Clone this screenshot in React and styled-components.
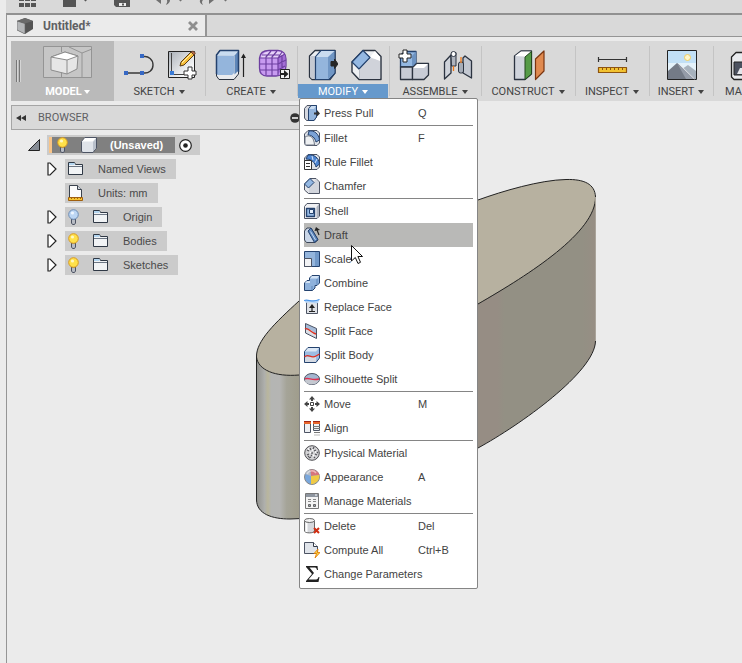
import React from "react";
import styled, { createGlobalStyle, css } from "styled-components";

const GlobalStyle = createGlobalStyle`
  * {
    box-sizing: border-box;
  }
  body {
    margin: 0;
    background: #ebebeb;
    color: #434343;
    font-family: "Liberation Sans", Arial, sans-serif;
    font-size: 11px;
  }
  button {
    border: 0;
    margin: 0;
    padding: 0;
    background: none;
    color: inherit;
    font: inherit;
  }
  svg {
    display: block;
    flex: none;
  }
`;

const Page = styled.div`
  display: flex;
  flex-direction: column;
  min-height: 100vh;
  padding-left: 6px;
  overflow: hidden;
`;

const QuickBar = styled.header`
  display: flex;
  height: 15px;
  padding-left: 12px;
  background: #d9d9d9;
  border-bottom: 2px solid #919191;
  overflow: hidden;
`;

const Main = styled.main`
  display: flex;
  flex: 1;
  flex-direction: column;
  border-left: 1px solid #959595;
`;

const TabStrip = styled.nav`
  display: flex;
  height: 22px;
  background: #d9d9d9;
  border-bottom: 1px solid #959595;
`;

const Tab = styled.div`
  display: flex;
  align-items: center;
  gap: 10px;
  width: 200px;
  padding: 0 7px 0 10px;
  background: #ebebeb;
  border-right: 2px solid #959595;
`;

const TabTitle = styled.span`
  flex: 1;
  color: #606064;
  font-family: Roboto, sans-serif;
  font-size: 12px;
  font-weight: 700;
`;

const Toolbar = styled.div`
  display: flex;
  height: 60px;
  margin: 4px 0 0 4px;
  background: #d9d9d9;
`;

const Workspace = styled.div`
  display: flex;
  flex: none;
  width: 103px;
  padding: 5px 0 3px 4px;
  background: #bababa;
`;

const Panel = styled.div`
  display: flex;
  flex: none;
  flex-direction: column;
  width: ${props => props.$width}px;
  padding: 5px 0 3px;
  background: linear-gradient(#c4c4c4, #c4c4c4) right 5px / 1px 50px no-repeat;
`;

const PanelIcons = styled.div`
  display: flex;
  flex: 1;
  align-items: center;
  justify-content: center;
  gap: 12px;
`;

const PanelFoot = styled.div`
  position: relative;
  padding-right: 2px;
`;

const PanelButton = styled.button`
  display: flex;
  align-items: center;
  justify-content: center;
  gap: 4px;
  width: 100%;
  height: 14px;
  padding-top: 1px;
  font-family: Roboto, sans-serif;
  font-size: 11px;
  line-height: 13px;
  ${props =>
    props.$active &&
    css`
      background: #6699cc;
      color: #fff;
    `}
`;

const WorkspaceButton = styled(PanelButton)`
  gap: 2px;
  color: #fff;
  font-weight: 700;
`;

const WorkspaceBody = styled.div`
  display: flex;
  flex: 1;
  flex-direction: column;
  align-items: center;
  justify-content: space-between;
`;

const Menu = styled.ul`
  position: absolute;
  top: 100%;
  left: 1px;
  z-index: 2;
  width: 179px;
  margin: 0;
  padding: 2px 4px;
  list-style: none;
  background: #fff;
  border: 1px solid #858585;
  border-radius: 2px;
`;

const MenuDivider = styled.li`
  height: 1px;
  background: #858585;
`;

const MenuRow = styled.li`
  position: relative;
`;

const MenuItem = styled.button`
  display: grid;
  grid-template-columns: 16px 90px 1fr;
  align-items: center;
  column-gap: 4px;
  width: 100%;
  height: 24px;
  text-align: left;
  white-space: nowrap;
  background: ${props => (props.$hover ? "#b9b9b7" : "none")};
`;

const Cursor = styled.svg`
  position: absolute;
  top: 22px;
  left: 47px;
  z-index: 3;
`;

const Viewport = styled.section`
  position: relative;
  flex: 1;
  padding: 4px 0 0 4px;
`;

const Scene = styled.svg`
  position: absolute;
  top: 0;
  left: 0;
`;

const Browser = styled.aside`
  position: relative;
  width: 290px;
`;

const BrowserHeader = styled.div`
  display: flex;
  align-items: center;
  height: 25px;
  padding: 0 0 0 4px;
  background: #d9d9d9;
  border: 1px solid #a5a5a5;
`;

const BrowserTitle = styled.span`
  flex: 1;
  margin-left: 12px;
  color: #606064;
  font-family: Roboto, sans-serif;
`;

const Tree = styled.ul`
  display: flex;
  flex-direction: column;
  gap: 4px;
  margin: 0;
  padding: 5px 0 0 36px;
  list-style: none;
`;

const TreeRow = styled.li`
  display: flex;
  align-items: center;
  height: 20px;
  margin-left: ${props => (props.$root ? "-19px" : "0")};
`;

const Toggle = styled.button`
  width: ${props => (props.$root ? "19px" : "18px")};
`;

const Chip = styled.div`
  display: flex;
  align-items: center;
  gap: 14px;
  height: 20px;
  padding: 0 10px 0 3px;
  background: #cbcbcb;
  color: #4a4a4a;
`;

const RootChip = styled(Chip)`
  padding: 0 8px 0 2px;
  gap: 4px;
`;

const RootLabel = styled.div`
  display: flex;
  align-items: center;
  gap: 13px;
  width: 126px;
  height: 16px;
  padding-left: 5px;
  background: #808080;
  border-left: 3px solid #f8c488;
  color: #fff;
  font-weight: 700;
`;

const Caret = () => (
  <svg width="6" height="4" viewBox="0 0 6 4">
    <path d="M0 0H6L3 4Z" fill="currentColor" />
  </svg>
);

/* toolbar icons */

const ink = "#2b3340";
const navy = "#24426e";
const Big = ({ children }) => (
  <svg width="32" height="32" viewBox="0 0 32 32" strokeLinejoin="round">
    {children}
  </svg>
);

const SpotIcon = () => (
  <Big>
    <path d="M4 24H20M20 7.500H23C26 7.500 31 10 31 16C31 22 26 24 23 24H20" fill="none" stroke="#383838" strokeWidth="1.400" />
    <path d="M2 22h4v4H2ZM18 22h4v4h-4ZM18 5h4v4h-4Z" fill="#3668c4" />
  </Big>
);

const SketchIcon = () => (
  <Big>
    <defs>
      <linearGradient id="paper" x1="0" y1="0" x2="1" y2="1">
        <stop offset="0" stopColor="#aab0b8" />
        <stop offset=".75" stopColor="#f6f7f8" />
      </linearGradient>
    </defs>
    <rect x="2.500" y="2.500" width="26" height="26" fill="url(#paper)" stroke="#222" />
    <path d="M5.500 4V25.500H20" fill="none" stroke="#444" />
    <rect x="4" y="22" width="4" height="4" fill="#3a7bd5" />
    <path d="M14 17L15 13L25 3L28 6L18 16Z" fill="#f8c03c" stroke="#5a3b12" />
    <path d="M16 14L25.500 4.500" stroke="#fff2b0" />
    <path d="M25 3L28 6L29.500 4L27 2Z" fill="#b06a4a" stroke="#6a3a22" strokeWidth=".6" />
    <path d="M22 18h4v4h4v4h-4v4h-4v-4h-4v-4h4Z" fill="#fff" stroke="#333" />
  </Big>
);

const ExtrudeIcon = () => (
  <Big>
    <path d="M2.500 6L6 1.500H24.500V25L20 30.500H5L2.500 27Z" fill="#e8eaee" stroke={ink} />
    <path d="M3 6.500H20V24L18 26H3Z" fill="#94b5dc" />
    <path d="M3 6L6.500 2H24L20 6.500Z" fill="#c9dcf0" />
    <path d="M20.500 6.500L24 2.500V22L20.500 25.500Z" fill="#5e86b8" />
    <path d="M2.500 25V6L6 1.500H24.500V23" fill="none" stroke={navy} strokeWidth="1.500" />
    <path d="M29.500 28V6" stroke="#222" strokeWidth="1.200" />
    <path d="M27 9L29.500 4.500L32 9Z" fill="#222" />
  </Big>
);

const FormIcon = () => (
  <Big>
    <path d="M1.500 9C2 4 6 1.500 11 1.500H20C25 1.500 28 5 28 10V17C28 22 24 27 18 27H9C4 27 1.500 24 1.500 19Z" fill="#c79af0" stroke="#6d3fa0" strokeWidth="1.300" />
    <path d="M3 8C5 4 8 2.500 12 2.500H20C24 3 26 5 26 6L20 9H4Z" fill="#e6d3f8" />
    <path d="M20 9L27 5V18L20 25Z" fill="#a36dd6" />
    <path d="M2 9H20L27 5M2 15H20L28 11M2 21H20L27 17M8 26V8L13 2M14 27V8L19 2M20 26V9L24 3M24 24V6M4 6H22" fill="none" stroke="#6d3fa0" strokeWidth="1.200" />
    <rect x="22.500" y="20.500" width="9" height="9" fill="#f2f2f2" stroke="#222" />
    <path d="M23 24h3v-3l4.500 4l-4.500 4v-3h-3Z" fill="#222" />
  </Big>
);

const PressPullIcon = () => (
  <Big>
    <path d="M3.500 7L9 1.500H29V24L24 30.500H6L3.500 28Z" fill="#eceef1" stroke={ink} strokeWidth="1.300" />
    <path d="M4 7H9V30H6L4 28Z" fill="#c5c9d2" />
    <path d="M9.500 8L15 1.500H29V24L23 30.500H9.500Z" fill="#94b5dc" stroke={navy} strokeWidth="1.200" />
    <path d="M10 8L15.500 2H28.500L23 8Z" fill="#cadcf0" />
    <path d="M22 8L28 2.500V24L22 30Z" fill="#7096c4" />
    <path d="M25 12.500h3.500V10L32 15L28.500 19.500V17H25Z" fill="#262626" stroke="#262626" />
  </Big>
);

const FilletIcon = () => (
  <Big>
    <path d="M2 13L13 1.500H25L31 7.500V30.500H9L2 23Z" fill="#eef0f2" stroke={ink} strokeWidth="1.400" />
    <path d="M10 20L21 9L30 11V30H10Z" fill="#d0d3da" />
    <path d="M20 8L25 2L30 8V12Z" fill="#fff" />
    <path d="M2 13L13 1.500L20 8.500L9 20Z" fill="#94b8e2" stroke={navy} strokeWidth="1.200" />
    <path d="M9.500 20.500V30" stroke="#b8bcc4" />
  </Big>
);

const ComponentIcon = () => (
  <Big>
    <path d="M2.500 6L7 2.500H18V14L15 18H2.500Z" fill="#94b8e2" stroke={navy} strokeWidth="1.300" />
    <path d="M14 7L18 2.500V14L14 18Z" fill="#6d93c2" />
    <path d="M2.500 18H14.500V30.500H2.500Z" fill="#c8ccd6" stroke={ink} strokeWidth="1.300" />
    <path d="M14.500 19L19 14.500H30.500V26L26 30.500H14.500Z" fill="#c8ccd6" stroke={ink} strokeWidth="1.300" />
    <path d="M15 19L19 15H30L26 19Z" fill="#fff" />
    <path d="M5 1h4v4h4v4h-4v4h-4v-4h-4v-4h4Z" fill="#fff" stroke="#222" />
  </Big>
);

const JointIcon = () => (
  <Big>
    <path d="M2.500 13L9 6V24L2.500 30Z" fill="#cfd3da" stroke={ink} strokeWidth="1.300" />
    <path d="M9 6L11 3.500H14V17H9.500Z" fill="#aeb4be" stroke={ink} />
    <circle cx="11.500" cy="5" r="2.500" fill="#fff" stroke={ink} />
    <path d="M21 9L23 7L29.500 12V29L21 24Z" fill="#c3c8d1" stroke={ink} strokeWidth="1.300" />
    <rect x="16.500" y="13" width="5" height="11" rx="2" fill="#a6adb8" stroke={ink} />
    <path d="M11.500 17V22M19 8V14" stroke="#f07818" strokeWidth="1.300" />
  </Big>
);

const PlaneIcon = () => (
  <Big>
    <path d="M1.500 7L8 2H18.500V25L12 30.500H1.500Z" fill="#d0d4dc" stroke={ink} strokeWidth="1.300" />
    <path d="M2 7L8 2.500H18L12 7.500Z" fill="#fff" />
    <path d="M12 8L18.500 2.500V25L12 30.500Z" fill="#559b48" stroke="#23491e" />
    <path d="M22.500 10L31 2V22L22.500 30.500Z" fill="#e08a50" stroke="#7a3510" strokeWidth="1.200" />
  </Big>
);

const InspectIcon = () => (
  <Big>
    <path d="M1.500 8V13M29.500 8V13M1.500 10.500H29.500" stroke="#333" strokeWidth="1.200" />
    <rect x="1.500" y="18.500" width="28" height="5" fill="#f2c230" stroke="#8e5410" strokeWidth="1.200" />
    <path d="M5.500 19v2M9.500 19v2M13.500 19v2M17.500 19v2M21.500 19v2M25.500 19v2" stroke="#8e5410" />
  </Big>
);

const ImageIcon = () => (
  <Big>
    <rect x="1.500" y="1.500" width="29" height="29" fill="#c2e0f6" stroke="#222" />
    <path d="M2 14H30V24H2Z" fill="#e4f2fa" />
    <path d="M16 20L22 16L30 22V30H16Z" fill="#a7b2bd" />
    <path d="M2 22L11 14L16 18L29 30H2Z" fill="#747b87" />
    <path d="M11 14L16 18L29 30H20Z" fill="#959ca8" />
    <path d="M13 15L28.500 30" stroke="#e8eaee" />
    <circle cx="21.500" cy="8.500" r="3" fill="#fff7cc" stroke="#f0cf60" />
  </Big>
);

const MakeIcon = () => (
  <Big>
    <path d="M1.500 8L6 3.500H27L31 8V26L28 30.500H4L1.500 28Z" fill="#e9ebee" stroke="#222" strokeWidth="1.300" />
    <rect x="4" y="13" width="25" height="13" fill="#4c5260" stroke="#222" />
    <path d="M7 25L10 19H20L23 25Z" fill="#e5e7eb" />
    <path d="M12 13h8v4l-4 4l-4-4Z" fill="#2f62c8" />
  </Big>
);

const WorkspaceIcon = () => (
  <svg width="50" height="32" viewBox="0 0 50 32" strokeLinejoin="round">
    <rect x=".5" y=".5" width="48" height="31" fill="#c6c6c6" stroke="#949494" />
    <path d="M18.500 0V6M18.500 26V31M26 1L39 7L49 3M39 7V31" fill="none" stroke="#949494" />
    <path d="M8 11L22 6L35 10L34 23L24 28L8 24Z" fill="#e6e6e6" stroke="#8c8c8c" />
    <path d="M8 11L22 6L35 10L24 14Z" fill="#fff" stroke="#8c8c8c" />
    <path d="M24 14V28" stroke="#8c8c8c" />
  </svg>
);

/* 16px icons */

const Small = ({ children }) => (
  <svg width="16" height="16" viewBox="0 0 16 16" fill="none" strokeLinejoin="round">
    {children}
  </svg>
);

const Block = () => (
  <path d="M.5 4L4 .5H13L15.500 3V13L13 15.500H2.500L.5 13Z" fill="#dfe2e8" stroke="#4c5363" />
);

const menuIcons = {
  press: (
    <Small>
      <path d="M.5 3.500L3 .5H12.500V12L10 15.500H2.500L.5 13Z" fill="#d5d8df" stroke="#4c5363" />
      <path d="M4.500 4L7 .5H12.500V12L10 15.500H4.500Z" fill="#94b5dc" stroke={navy} />
      <path d="M5 4L7.500 1H12L10 4Z" fill="#cadcf0" />
      <path d="M10 7.500H13V5L16 8.500L13 11.500V9.500H10Z" fill="#333" />
    </Small>
  ),
  fillet: (
    <Small>
      <Block />
      <path d="M5 1C10 0 15 4 15.500 10L12 12C11 8 8 5 4 5Z" fill="#7ba2d6" stroke={navy} />
      <path d="M1 7C6 4 10 7 10.500 15H1Z" fill="#eef0f2" stroke="#6f7785" />
    </Small>
  ),
  rule: (
    <Small>
      <Block />
      <path d="M4 1C10 0 15 4 15.500 10L12 13C11 9 8 5 2 5Z" fill="#4f86d2" stroke={navy} />
      <path d="M8 2L9 6M13 5L11 9" stroke="#d6e6fa" />
      <rect x=".5" y="6.500" width="7" height="9" fill="#fff" stroke="#333" />
      <path d="M2 9.500h4M2 12.500h4" stroke="#333" />
    </Small>
  ),
  chamfer: (
    <Small>
      <path d="M.5 6L6 .5H12L15.500 4V15.500H4.500L.5 12Z" fill="#e2e4e9" stroke="#4c5363" />
      <path d="M10 4L12 1L15 4.500V15H5V10Z" fill="#d2d5dc" />
      <path d="M.5 6L6 .5L10 4.500L4.500 10Z" fill="#94b8e2" stroke={navy} />
    </Small>
  ),
  shell: (
    <Small>
      <path d="M.5 3.500L3 .5H15.500V13L13 15.500H.5Z" fill="#f0f1f4" stroke="#4c5363" />
      <path d="M12.500 4L15 1V13L12.500 15Z" fill="#aeb4c0" />
      <rect x="2.500" y="5.500" width="8" height="8" fill="#94b8e2" stroke={navy} strokeWidth="1.400" />
      <path d="M5.500 6.500v4h4v-4Z" fill="#e6effa" stroke={navy} />
    </Small>
  ),
  draft: (
    <Small>
      <path d="M.5 4L3 1L7 1L14 13L11 15.500H2.500L.5 13Z" fill="#c9d6e8" stroke="#3c4658" />
      <path d="M4 4L7 1L14 12.500L10.500 15.500Z" fill="#5f88bd" stroke={navy} />
      <path d="M6.500 4.500L11.500 13" stroke="#c7dbf2" />
      <path d="M15 8L13 3" stroke="#222" strokeWidth="1.200" />
      <path d="M10.500 4L12 0L16 3Z" fill="#222" />
    </Small>
  ),
  scale: (
    <Small>
      <rect x=".5" y=".5" width="15" height="15" fill="#94b5dc" stroke={navy} />
      <path d="M11 1h4v14h-4Z" fill="#7299c8" />
      <path d="M.5 7.500H7.500V15.500H.5Z" fill="#f2f3f5" stroke="#4c5363" />
    </Small>
  ),
  combine: (
    <Small>
      <path d="M5.500 3L8 .5H15.500V8L13 10.500H11V13L8.500 15.500H.5V8L3 5.500H5.500Z" fill="#8fb2dc" stroke={navy} />
      <path d="M6 3.500L8 1H15L13 3.500ZM1 8L3 6H6V8Z" fill="#d3e3f5" />
      <path d="M13 4V10M8 11V15" stroke="#5f87ba" />
    </Small>
  ),
  replace: (
    <Small>
      <path d="M2.500 2V14.500H13.500V2" fill="#dfe2e7" stroke="#4c5363" />
      <path d="M0 1.500C5 0 8 4 15.500 0L14 4C9 5 6 2 2 4Z" fill="#b5d5f8" />
      <path d="M0 1.500C5 0 8 4 15.500 .5" stroke="#4d98ec" strokeWidth="1.200" />
      <path d="M8 12.500V7M5 12.500h6" stroke="#222" strokeWidth="1.200" />
      <path d="M5 9L8 5L11 9Z" fill="#222" />
    </Small>
  ),
  splitFace: (
    <Small>
      <path d="M1.500 .5L12.500 5.500V15.500L1.500 10Z" fill="#a5bbd8" stroke="#4c5363" />
      <path d="M2 7L7 7L12 11V14.500L2 9.500Z" fill="#dcdfe5" />
      <path d="M1 6C4 4 7 10 12 11" stroke="#e03020" strokeWidth="1.300" />
    </Small>
  ),
  splitBody: (
    <Small>
      <path d="M.5 4.500L4 .5H15.500V11L12 15.500H.5Z" fill="#9cbce2" stroke={navy} />
      <path d="M1 4.500L4 1H15L12 4.500Z" fill="#dbe7f5" />
      <path d="M1 10H12V15H1Z" fill="#d5dae3" />
      <path d="M.5 10C4 6 7 12 12 9L15.500 7" stroke="#e03020" strokeWidth="1.300" />
    </Small>
  ),
  silhouette: (
    <Small>
      <ellipse cx="8" cy="8" rx="7.500" ry="5.500" fill="#a3b6d0" stroke="#4c5363" />
      <path d="M1 9C4 5 8 11 15 8C15 15 1 15 1 9Z" fill="#c4c8d0" />
      <path d="M1 8C4 6 8 10 15 8" stroke="#e03050" strokeWidth="1.500" />
    </Small>
  ),
  move: (
    <Small>
      <path d="M8 0L11 3.500H9V5H7V3.500H5ZM8 16L5 12.500H7V11H9V12.500H11ZM0 8L3.500 5V7H5V9H3.500V11ZM16 8L12.500 11V9H11V7H12.500V5Z" fill="#444" />
      <rect x="6.500" y="6.500" width="3" height="3" stroke="#444" />
    </Small>
  ),
  align: (
    <Small>
      <path d="M.5 1.500h6v11h-6ZM9.500 1.500h6v9h-6Z" fill="#eef0f3" stroke="#4c5363" />
      <path d="M0 1h7v3h-7ZM9 1h7v3h-7Z" fill="#e8662c" />
      <path d="M0 1.500h7M9 1.500h7" stroke="#a02818" />
      <path d="M9 6.500h7M9 8.500h7M10 12.500h6" stroke="#777" />
      <path d="M10 15h6" stroke="#bbb" />
    </Small>
  ),
  physical: (
    <Small>
      <circle cx="8" cy="8" r="7.300" fill="#d4d4d6" stroke="#4e4e52" />
      <path d="M3 5l2 1M6 3l1 2M10 2l-1 2M12 5l-2 1M5 9l-2 1M8 7v2M11 9l2 1M7 12l-2 1M10 12l1 1M4 12l1-1M7 10l1 1M13 7l1 1" stroke="#55555a" strokeWidth="1.300" />
      <path d="M4 3.500l1 1M8 4.500l1 1M6 7l1 1M9 10l1 1M11 7l1 0" stroke="#fff" strokeWidth="1.500" />
    </Small>
  ),
  appearance: (
    <Small>
      <circle cx="8" cy="8" r="7.500" fill="#79a7dc" stroke="#888" />
      <path d="M7 7L6 .8C11 0 15 3 15.300 6Z" fill="#d7747c" />
      <path d="M7 7L15.300 6C16 11 12 15 7 15.200Z" fill="#f0ca45" />
      <path d="M7 7L1 5C2 3 4 1 6 .8Z" fill="#b3bbc6" />
      <path d="M3 5C5 1 10 1 12 4" stroke="#fff" strokeOpacity=".5" strokeWidth="1.500" />
    </Small>
  ),
  manage: (
    <Small>
      <rect x="1.500" y=".5" width="13" height="15" fill="#f4f4f4" stroke="#777" />
      <path d="M2 2.500h12" stroke="#8e959f" strokeWidth="3" />
      <path d="M11 2h2" stroke="#fff" />
      <path d="M4 6.500h3M9 6.500h3M4 8.500h3M9 8.500h3" stroke="#888" />
      <path d="M4.500 11.500h2v2h-2ZM9.500 11.500h2v2h-2Z" fill="#9ca3ae" stroke="#666" />
    </Small>
  ),
  remove: (
    <Small>
      <path d="M.5 2.500V13C1 15.500 10 15.500 10.500 13V2.500" fill="#d6d8dc" stroke="#666" />
      <path d="M2.500 4V14" stroke="#fff" strokeWidth="2" />
      <ellipse cx="5.500" cy="2.500" rx="5" ry="2" fill="#f3f3f3" stroke="#666" />
      <path d="M10 10L15 15M15 10L10 15" stroke="#d02c10" strokeWidth="2" />
    </Small>
  ),
  compute: (
    <Small>
      <path d="M.5 .5H9.500L13.500 4.500V11.500H.5Z" fill="#e0e4ea" stroke="#4c5363" />
      <path d="M9.500 .5V4.500H13.500" fill="#fff" stroke="#333b48" />
      <path d="M14 7L10 11.500H12.500L11 16L16 10.500H13.500Z" fill="#ffd23c" stroke="#e07808" strokeWidth=".8" />
    </Small>
  ),
  sigma: (
    <Small>
      <path d="M2 0H13.500L14 4H13C12.500 2 12 1.500 10 1.500H5.500L10 7L4.500 13.500H11C13 13.500 14 13 14.500 11H15.500L14.500 16H2V15L8 8L2 1Z" fill="#222" />
    </Small>
  )
};

/* browser tree icons */

const Bulb = ({ off }) => (
  <svg width="11" height="16" viewBox="0 0 11 16">
    <path d="M3.500 10H7.500V14L6.500 15.500H4.500L3.500 14Z" fill="#b8bcc4" stroke="#4c5363" />
    <circle cx="5.500" cy="5.500" r="4.800" fill={off ? "#bcd6f4" : "#ffe14a"} stroke={off ? "#6c8cb4" : "#d89a20"} />
    <circle cx="4.500" cy="4" r="1.600" fill={off ? "#eef6ff" : "#fff8c4"} />
  </svg>
);

const Folder = () => (
  <Small>
    <path d="M.5 1.500H6.500L7.500 3.500H14.500V13.500H.5Z" fill="#f1f3f5" stroke="#2f3845" />
    <path d="M1 3H6.500" stroke="#b4d6f0" strokeWidth="2" />
    <path d="M1 5.500H14" stroke="#6c7684" />
  </Small>
);

const UnitsIcon = () => (
  <Small>
    <path d="M1.500 12V.5H9.500L13.500 4.500V12" fill="#fbfbfb" stroke="#3a424e" />
    <path d="M9.500 .5V4.500H13.500" fill="#d0d5dc" stroke="#3a424e" />
    <rect x=".5" y="12.500" width="14" height="3" fill="#f6c430" stroke="#a06010" />
    <path d="M3.500 12v2M6.500 12v2M9.500 12v2M12.500 12v2" stroke="#a06010" />
  </Small>
);

const CubeIcon = () => (
  <Small>
    <path d="M.5 4.500L4 .5H15.500V11L12 15.500H1.500L.5 14Z" fill="#dfe3e9" stroke="#4c5363" />
    <path d="M1 4.500L4 1H15L11.500 4.500Z" fill="#fff" />
    <path d="M12 5L15 1.500V11L12 14.500Z" fill="#b9c0cb" />
  </Small>
);

const Expander = () => (
  <svg width="10" height="14" viewBox="0 0 10 14">
    <path d="M1 1H3L9 7L3 13H1Z" fill="#fff" stroke="#222" strokeWidth="1.200" />
  </svg>
);

const RootExpander = () => (
  <svg width="12" height="12" viewBox="0 0 12 12">
    <path d="M11.500 .5V11.500H.5Z" fill="#858b94" stroke="#222" />
  </svg>
);

const panels = [
  { label: "SKETCH", width: 92, icons: [SpotIcon, SketchIcon] },
  { label: "CREATE", width: 92, icons: [ExtrudeIcon, FormIcon] },
  { label: "MODIFY", width: 92, icons: [PressPullIcon, FilletIcon], open: true },
  { label: "ASSEMBLE", width: 92, icons: [ComponentIcon, JointIcon] },
  { label: "CONSTRUCT", width: 94, icons: [PlaneIcon] },
  { label: "INSPECT", width: 74, icons: [InspectIcon] },
  { label: "INSERT", width: 64, icons: [ImageIcon] },
  { label: "MAKE", width: 64, icons: [MakeIcon] }
];

const menuGroups = [
  [{ text: "Press Pull", icon: "press", keys: "Q" }],
  [
    { text: "Fillet", icon: "fillet", keys: "F" },
    { text: "Rule Fillet", icon: "rule" },
    { text: "Chamfer", icon: "chamfer" }
  ],
  [
    { text: "Shell", icon: "shell" },
    { text: "Draft", icon: "draft", hover: true },
    { text: "Scale", icon: "scale" },
    { text: "Combine", icon: "combine" },
    { text: "Replace Face", icon: "replace" },
    { text: "Split Face", icon: "splitFace" },
    { text: "Split Body", icon: "splitBody" },
    { text: "Silhouette Split", icon: "silhouette" }
  ],
  [
    { text: "Move", icon: "move", keys: "M" },
    { text: "Align", icon: "align" }
  ],
  [
    { text: "Physical Material", icon: "physical" },
    { text: "Appearance", icon: "appearance", keys: "A" },
    { text: "Manage Materials", icon: "manage" }
  ],
  [
    { text: "Delete", icon: "remove", keys: "Del" },
    { text: "Compute All", icon: "compute", keys: "Ctrl+B" },
    { text: "Change Parameters", icon: "sigma" }
  ]
];

const treeRows = [
  { text: "Named Views", icon: <Folder />, toggle: true },
  { text: "Units: mm", icon: <UnitsIcon /> },
  { text: "Origin", icon: <Folder />, toggle: true, bulb: "off" },
  { text: "Bodies", icon: <Folder />, toggle: true, bulb: "on" },
  { text: "Sketches", icon: <Folder />, toggle: true, bulb: "on" }
];

const ModifyMenu = () => (
  <Menu>
    {menuGroups.map((group, i) => (
      <React.Fragment key={i}>
        {i > 0 && <MenuDivider role="separator" />}
        {group.map(item => (
          <MenuRow key={item.text}>
            <MenuItem $hover={item.hover}>
              {menuIcons[item.icon]}
              <span>{item.text}</span>
              <span>{item.keys}</span>
            </MenuItem>
            {item.hover && (
              <Cursor width="12" height="20" viewBox="0 0 12 20">
                <path d="M.5 .5V16L4.300 12.500L7 18.500L9.500 17.300L6.900 11.500H11.500Z" fill="#fff" stroke="#111" />
              </Cursor>
            )}
          </MenuRow>
        ))}
      </React.Fragment>
    ))}
  </Menu>
);

const Solid = () => (
  <Scene width="600" height="430" viewBox="7 101 600 430" fill="none">
    <defs>
      <linearGradient id="side" gradientUnits="userSpaceOnUse" x1="256" y1="0" x2="596" y2="0">
        <stop offset="0" stopColor="#8f8f8b" />
        <stop offset=".025" stopColor="#aeafac" />
        <stop offset=".035" stopColor="#b9b69d" />
        <stop offset=".045" stopColor="#b4b5b3" />
        <stop offset=".07" stopColor="#b5b5b3" />
        <stop offset=".09" stopColor="#a5a498" />
        <stop offset=".13" stopColor="#9f9c8b" />
        <stop offset=".3" stopColor="#968d84" />
        <stop offset=".71" stopColor="#968d84" />
        <stop offset=".73" stopColor="#939084" />
        <stop offset=".96" stopColor="#939084" />
        <stop offset="1" stopColor="#978e84" />
      </linearGradient>
    </defs>
    <path d="M256.500 357V500C257 514 272 519 290 519C340 519 420 484 478 448C520 425 595 372 595.500 341V197Z" fill="url(#side)" />
    <path d="M256.500 357C256 341 275 323 299 301C345 265 410 224 478 200C503 191 540 180 566 179.500C584 179 595 184 595.500 197C596 232 530 274 478 304C420 340 350 371 299 375C275 377 258 370 256.500 357Z" fill="#b7b1a0" stroke="#222" />
    <path d="M256.500 357V500C257 514 272 519 290 519C340 519 420 484 478 448C520 425 595 372 595.500 341" stroke="#222" />
    <path d="M595.500 197V341" stroke="#aaa49a" />
  </Scene>
);

export default () => (
  <Page>
    <GlobalStyle />
    <QuickBar>
      <svg width="240" height="8" viewBox="18 0 240 8" fill="#555">
        <path d="M19 0h5v1h-5ZM25 0h5v1h-5ZM31 0h5v1h-5ZM19 3h5v4h-5ZM25 3h5v4h-5ZM31 3h5v4h-5ZM63 0h13v7H63ZM84 0h3l-1.500 1.500ZM114 0h16v7h-14l-2-2Z" />
        <path d="M119 3h7v3h-7Z" fill="#eee" />
        <path d="M122 3.500h2v2h-2Z" />
        <path d="M156 0h5v4ZM167 0h3q0 3-4 5q2-3 1-5ZM179 0h3l-1.500 1.500ZM200 0h3q-2 2 0 5q-4-2-3-5ZM209 0h5l-5 4ZM224 0h3l-1.500 1.500Z" fill="#707070" />
      </svg>
    </QuickBar>
    <Main>
      <TabStrip>
        <Tab>
          <svg width="16" height="16" viewBox="0 0 16 16">
            <path d="M0 3L8 0L16 3V11L8 16L0 12Z" fill="#555" />
            <path d="M0 3L8 5.500V16L0 12Z" fill="#b5b7b9" stroke="#666" strokeWidth=".6" />
            <path d="M0 3L8 0L16 3L8 5.500Z" fill="#6a6a6a" />
          </svg>
          <TabTitle>Untitled*</TabTitle>
          <button aria-label="Close tab">
            <svg width="10" height="10" viewBox="0 0 10 10">
              <path d="M1 1L9 9M9 1L1 9" stroke="#8e8e8e" strokeWidth="2.800" />
            </svg>
          </button>
        </Tab>
      </TabStrip>
      <Toolbar>
        <Workspace>
          <svg width="6" height="50" viewBox="0 0 6 50">
            <path d="M1.500 14V36M4.500 14V36" stroke="#777" />
            <path d="M2.500 14V36M5.500 14V36" stroke="#e8e8e8" strokeWidth=".6" />
          </svg>
          <WorkspaceBody>
            <WorkspaceIcon />
            <WorkspaceButton>
              MODEL <Caret />
            </WorkspaceButton>
          </WorkspaceBody>
        </Workspace>
        {panels.map(panel => (
          <Panel key={panel.label} $width={panel.width}>
            <PanelIcons>
              {panel.icons.map((Icon, i) => (
                <Icon key={i} />
              ))}
            </PanelIcons>
            <PanelFoot>
              <PanelButton $active={panel.open}>
                {panel.label} <Caret />
              </PanelButton>
              {panel.open && <ModifyMenu />}
            </PanelFoot>
          </Panel>
        ))}
      </Toolbar>
      <Viewport>
        <Solid />
        <Browser>
          <BrowserHeader>
            <button aria-label="Collapse browser">
              <svg width="10" height="6" viewBox="0 0 10 6">
                <path d="M5 0V6L0 3ZM10 0V6L5 3Z" fill="#333" />
              </svg>
            </button>
            <BrowserTitle>BROWSER</BrowserTitle>
            <button aria-label="Minimize">
              <svg width="10" height="10" viewBox="0 0 10 10">
                <circle cx="5" cy="5" r="4.800" fill="#333" />
                <path d="M2 5H8" stroke="#fff" strokeWidth="1.500" />
              </svg>
            </button>
          </BrowserHeader>
          <Tree>
            <TreeRow $root>
              <Toggle $root aria-label="Collapse">
                <RootExpander />
              </Toggle>
              <RootChip>
                <RootLabel>
                  <Bulb />
                  <CubeIcon />
                  (Unsaved)
                </RootLabel>
                <svg width="13" height="13" viewBox="0 0 13 13">
                  <circle cx="6.500" cy="6.500" r="5.800" fill="#fff" stroke="#222" strokeWidth="1.200" />
                  <circle cx="6.500" cy="6.500" r="2.300" fill="#222" />
                </svg>
              </RootChip>
            </TreeRow>
            {treeRows.map(row => (
              <TreeRow key={row.text}>
                <Toggle aria-label={"Expand " + row.text} disabled={!row.toggle}>
                  {row.toggle && <Expander />}
                </Toggle>
                <Chip>
                  {row.bulb && <Bulb off={row.bulb === "off"} />}
                  {row.icon}
                  <span>{row.text}</span>
                </Chip>
              </TreeRow>
            ))}
          </Tree>
        </Browser>
      </Viewport>
    </Main>
  </Page>
);
